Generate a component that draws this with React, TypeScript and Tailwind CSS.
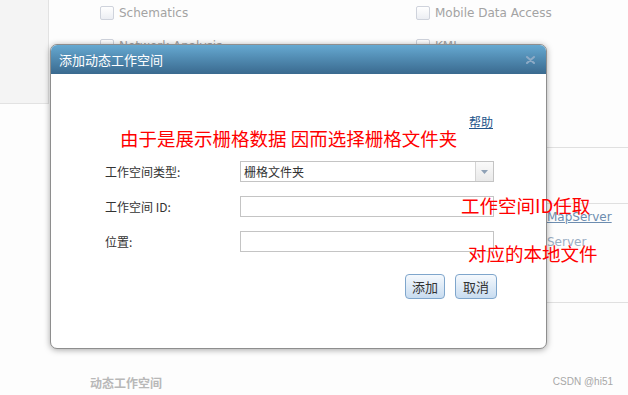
import React from "react"

function Checkbox({ label }: { label: string }) {
  return (
    <div className="flex h-[20px] items-center gap-[5px]">
      <span className="h-[14px] w-[14px] rounded-[2px] border border-[#cfd3dc] bg-gradient-to-b from-white to-[#eceef3]" />
      <span className="font-['DejaVu_Sans',sans-serif] text-[12px] text-[#a3a3a3]">{label}</span>
    </div>
  )
}

function FormRow({ label, children }: { label: string; children: React.ReactNode }) {
  return (
    <div className="flex h-[21px] items-center">
      <label className="w-[135px] text-[12px] leading-[16px] text-[#333]">{label}</label>
      {children}
    </div>
  )
}

function DialogButton({ children, width }: { children: React.ReactNode; width: string }) {
  return (
    <button
      className={
        "flex h-[25px] items-center justify-center rounded-[4px] border border-[#7fa6cc] bg-gradient-to-b from-[#f5f9fd] to-[#c8dcf0] text-[13px] text-[#333] " +
        width
      }
    >
      {children}
    </button>
  )
}

export default function App() {
  return (
    <div className="relative h-[395px] w-[628px] overflow-hidden bg-[#fdfdfd] font-['Noto_Sans_CJK_SC',sans-serif]">
      {/* page behind the dialog */}
      <div className="flex h-full">
        <aside className="w-[49px] shrink-0">
          <div className="h-[104px] border-r border-b border-[#e2e2e2] bg-[#f4f4f4]" />
        </aside>
        <main className="flex flex-1 flex-col">
          <div className="grid grid-cols-[316px_1fr] gap-y-[13px] pt-[3px] pl-[51px]">
            <Checkbox label="Schematics" />
            <Checkbox label="Mobile Data Access" />
            <Checkbox label="Network Analysis" />
            <Checkbox label="KML" />
          </div>
          <div className="ml-[491px] flex flex-col">
            <div className="h-[92px] border-b border-[#e0e0e0]" />
            <div className="h-[56px] border-b border-[#e0e0e0]" />
            <div className="flex h-[99px] flex-col gap-[9px] border-b border-[#e0e0e0] pt-[5px] pl-[7px] font-['DejaVu_Sans',sans-serif] text-[12px] leading-[16px]">
              <a className="text-[#6d8db0] underline">MapServer</a>
              <span className="text-[#9aaec4]">Server</span>
            </div>
          </div>
          <h3 className="mt-[72px] pl-[41px] text-[12px] font-bold leading-[16px] text-[#b8b8b8]">动态工作空间</h3>
        </main>
      </div>

      {/* dialog */}
      <div className="absolute left-[50px] top-[44px] flex h-[305px] w-[497px] flex-col overflow-hidden rounded-[7px] border border-[#8e8e8e] bg-white shadow-[0_1px_6px_rgba(0,0,0,0.35)]">
        <div className="flex h-[29px] shrink-0 items-center justify-between bg-gradient-to-b from-[#66a9d1] to-[#3a6a8f] pl-[8px] pr-[11px]">
          <span className="text-[13px] leading-[16px] text-white">添加动态工作空间</span>
          <svg width="9" height="8" viewBox="0 0 9 8">
            <path d="M1 1 L8 7 M8 1 L1 7" stroke="#8eabc6" strokeWidth="2" strokeLinecap="round" />
          </svg>
        </div>
        <div className="flex flex-col pt-[40px]">
          <div className="flex justify-end pr-[53px]">
            <a className="text-[12px] leading-[16px] text-[#22558a] underline">帮助</a>
          </div>
          <p className="-mt-[3px] pl-[69px] text-[18.5px] leading-[22px] text-[#ff0000]">
            由于是展示栅格数据 因而选择栅格文件夹
          </p>
          <div className="mt-[12px] flex flex-col gap-[14px] pl-[54px]">
            <FormRow label="工作空间类型:">
              <div className="flex h-full w-[254px] items-stretch border border-[#c4c4c4]">
                <span className="flex-1 pl-[3px] text-[12px] leading-[19px] text-[#333]">栅格文件夹</span>
                <span className="flex w-[18px] items-center justify-center border-l border-[#d4d4d4] bg-gradient-to-b from-[#fafafa] to-[#e9e9e9]">
                  <svg width="7" height="4" viewBox="0 0 7 4">
                    <path d="M0 0 H7 L3.5 4 Z" fill="#8fa1b6" />
                  </svg>
                </span>
              </div>
            </FormRow>
            <FormRow label="工作空间 ID:">
              <input className="h-full w-[254px] border border-[#c4c4c4] bg-white outline-none" />
            </FormRow>
            <FormRow label="位置:">
              <input className="h-full w-[254px] border border-[#c4c4c4] bg-white outline-none" />
            </FormRow>
          </div>
          <div className="mt-[22px] flex justify-end gap-[10px] pr-[49px]">
            <DialogButton width="w-[40px]">添加</DialogButton>
            <DialogButton width="w-[42px]">取消</DialogButton>
          </div>
        </div>
      </div>

      {/* red annotations over the screenshot */}
      <span className="absolute left-[461px] top-[193px] text-[18.5px] leading-[24px] text-[#ff0000]">工作空间ID任取</span>
      <span className="absolute left-[468px] top-[241px] text-[18.5px] leading-[24px] text-[#ff0000]">对应的本地文件</span>

      <span className="absolute right-[15px] bottom-[7px] font-['Liberation_Sans',sans-serif] text-[10px] leading-[12px] text-[#a8a8a8]">
        CSDN @hi51
      </span>
    </div>
  )
}
